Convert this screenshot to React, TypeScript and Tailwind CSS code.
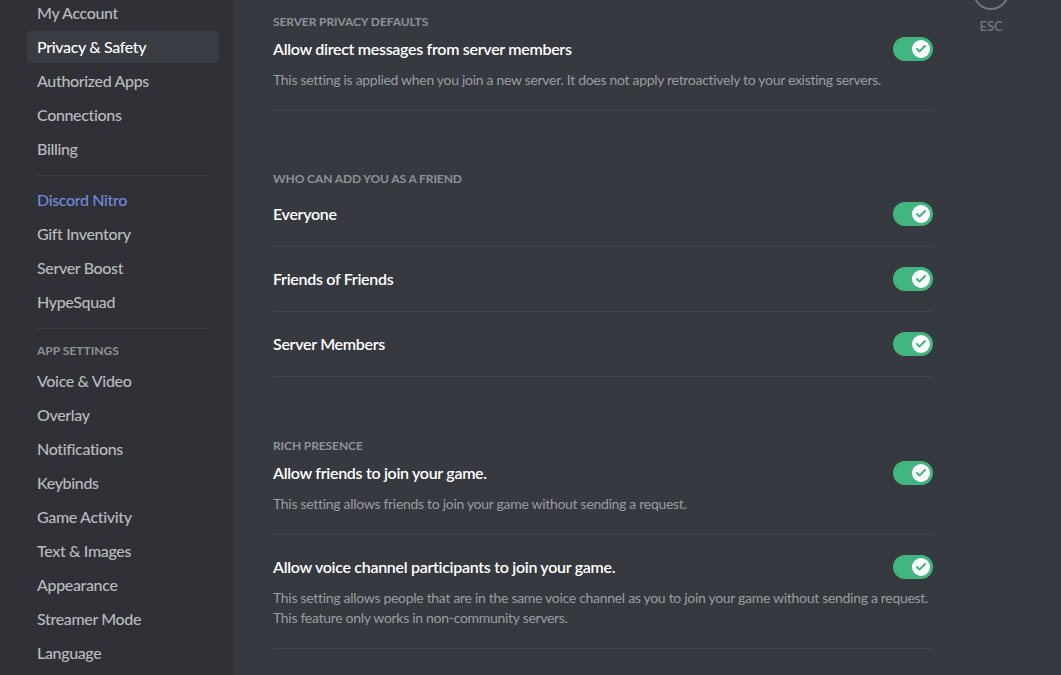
import { Check } from 'lucide-react'

const accountItems = ['My Account', 'Privacy & Safety', 'Authorized Apps', 'Connections', 'Billing']
const nitroItems = ['Gift Inventory', 'Server Boost', 'HypeSquad']
const appItems = [
  'Voice & Video',
  'Overlay',
  'Notifications',
  'Keybinds',
  'Game Activity',
  'Text & Images',
  'Appearance',
  'Streamer Mode',
  'Language',
]

function NavItem({ label, selected, accent }: { label: string; selected?: boolean; accent?: boolean }) {
  return (
    <div
      className={
        'flex h-8 items-center rounded px-[10px] text-base font-medium tracking-[-0.35px] ' +
        (selected ? 'bg-[#393c43] text-white' : accent ? 'text-[#7289da]' : 'text-[#b9bbbe]')
      }
    >
      {label}
    </div>
  )
}

function Toggle() {
  return (
    <div className="flex h-6 w-10 shrink-0 items-center justify-end rounded-full bg-[#43b581] px-[3px]">
      <div className="flex h-[18px] w-[18px] items-center justify-center rounded-full bg-white">
        <Check className="h-3 w-3 text-[#43b581]" strokeWidth={4} />
      </div>
    </div>
  )
}

function SettingRow({ title, desc }: { title: string; desc?: string[] }) {
  return (
    <div className="mb-5 border-b border-[#42454b] pb-5">
      <div className="flex items-center justify-between">
        <div className="text-base leading-6 font-semibold tracking-[-0.3px] text-white">{title}</div>
        <Toggle />
      </div>
      {desc && (
        <div className="mt-[9px] text-sm leading-5 tracking-[-0.3px] text-[#9a9da1]">
          {desc.map((d) => (
            <div key={d}>{d}</div>
          ))}
        </div>
      )}
    </div>
  )
}

function SectionHeader({ children, gap }: { children: string; gap: string }) {
  return (
    <div className={'text-xs leading-4 font-bold uppercase tracking-[-0.1px] text-[#8e9297] ' + gap}>
      {children}
    </div>
  )
}

export default function App() {
  return (
    <div
      className="flex h-[675px] w-[1061px] overflow-hidden bg-[#36393f]"
      style={{ fontFamily: 'Lato, "Noto Sans", sans-serif' }}
    >
      <aside className="w-[233px] shrink-0 bg-[#2f3136]">
        <div className="mt-[-3px] ml-[27px] w-[192px] flex flex-col">
          <div className="flex flex-col gap-[2px]">
            {accountItems.map((i) => (
              <NavItem key={i} label={i} selected={i === 'Privacy & Safety'} />
            ))}
          </div>
          <div className="mx-[10px] mt-[10px] mb-2 h-px bg-[#3b3e44]" />
          <div className="flex flex-col gap-[2px]">
            <NavItem label="Discord Nitro" accent />
            {nitroItems.map((i) => (
              <NavItem key={i} label={i} />
            ))}
          </div>
          <div className="mx-[10px] mt-[10px] h-px bg-[#3b3e44]" />
          <div className="px-[10px] pt-[14px] pb-[6px] text-xs leading-4 font-bold uppercase text-[#8e9297]">
            App Settings
          </div>
          <div className="flex flex-col gap-[2px]">
            {appItems.map((i) => (
              <NavItem key={i} label={i} />
            ))}
          </div>
        </div>
      </aside>

      <main className="flex">
        <div className="ml-10 w-[660px] pt-[14px]">
          <SectionHeader gap="mb-[7px]">Server Privacy Defaults</SectionHeader>
          <SettingRow
            title="Allow direct messages from server members"
            desc={[
              'This setting is applied when you join a new server. It does not apply retroactively to your existing servers.',
            ]}
          />

          <div className="pt-[40px]">
            <SectionHeader gap="mb-[15px]">Who can add you as a friend</SectionHeader>
            <SettingRow title="Everyone" />
            <SettingRow title="Friends of Friends" />
            <SettingRow title="Server Members" />
          </div>

          <div className="pt-[41px]">
            <SectionHeader gap="mb-[7px]">Rich Presence</SectionHeader>
            <SettingRow
              title="Allow friends to join your game."
              desc={['This setting allows friends to join your game without sending a request.']}
            />
            <SettingRow
              title="Allow voice channel participants to join your game."
              desc={[
                'This setting allows people that are in the same voice channel as you to join your game without sending a request.',
                'This feature only works in non-community servers.',
              ]}
            />
          </div>
        </div>

        <div className="ml-10 flex w-9 flex-col items-center">
          <div className="mt-[-26px] h-9 w-9 rounded-full border-2 border-[#72767d]" />
          <div className="mt-[7px] text-[13px] font-semibold text-[#72767d]">ESC</div>
        </div>
      </main>
    </div>
  )
}
